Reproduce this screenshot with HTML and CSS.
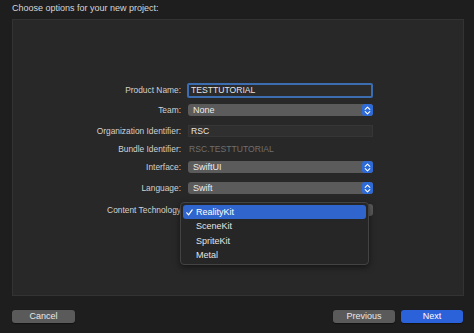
FILE: index.html
```html
<!DOCTYPE html>
<html lang="en">
<head>
    <meta charset="UTF-8">
    <meta name="viewport" content="width=device-width, initial-scale=1.0">
    <title>Choose options for your new project</title>
    <link rel="stylesheet" href="styles.css">
</head>
<body>
    <div class="sheet">
        <div class="title">Choose options for your new project:</div>

        <div class="panel">
            <div class="form">
                <label class="label">Product Name:</label>
                <div class="cell"><div class="field focused">TESTTUTORIAL</div></div>

                <label class="label">Team:</label>
                <div class="cell">
                    <div class="popup">None
                        <span class="stepper"><svg width="7" height="9" viewBox="0 0 7 9"><path d="M1.2 3.3 3.5 1.2 5.8 3.3M1.2 5.7 3.5 7.8 5.8 5.7" fill="none" stroke="#fff" stroke-width="1.1" stroke-linecap="round" stroke-linejoin="round"/></svg></span>
                    </div>
                </div>

                <label class="label">Organization Identifier:</label>
                <div class="cell"><div class="field">RSC</div></div>

                <label class="label">Bundle Identifier:</label>
                <div class="cell"><div class="static">RSC.TESTTUTORIAL</div></div>

                <label class="label">Interface:</label>
                <div class="cell">
                    <div class="popup">SwiftUI
                        <span class="stepper"><svg width="7" height="9" viewBox="0 0 7 9"><path d="M1.2 3.3 3.5 1.2 5.8 3.3M1.2 5.7 3.5 7.8 5.8 5.7" fill="none" stroke="#fff" stroke-width="1.1" stroke-linecap="round" stroke-linejoin="round"/></svg></span>
                    </div>
                </div>

                <label class="label">Language:</label>
                <div class="cell">
                    <div class="popup">Swift
                        <span class="stepper"><svg width="7" height="9" viewBox="0 0 7 9"><path d="M1.2 3.3 3.5 1.2 5.8 3.3M1.2 5.7 3.5 7.8 5.8 5.7" fill="none" stroke="#fff" stroke-width="1.1" stroke-linecap="round" stroke-linejoin="round"/></svg></span>
                    </div>
                </div>

                <label class="label">Content Technology</label>
                <div class="cell menu-anchor">
                    <!-- popup sits under the open menu, only its right edge shows -->
                    <div class="popup"></div>
                    <ul class="menu">
                        <li class="menu-item selected"><svg class="check" width="7" height="7" viewBox="0 0 7 7"><path d="M0.8 3.8 2.6 5.8 6.2 0.9" fill="none" stroke="#fff" stroke-width="1.2" stroke-linecap="round" stroke-linejoin="round"/></svg>RealityKit</li>
                        <li class="menu-item">SceneKit</li>
                        <li class="menu-item">SpriteKit</li>
                        <li class="menu-item">Metal</li>
                    </ul>
                </div>
            </div>
        </div>

        <div class="footer">
            <button class="btn">Cancel</button>
            <div class="footer-right">
                <button class="btn">Previous</button>
                <button class="btn primary">Next</button>
            </div>
        </div>
    </div>
</body>
</html>
```

FILE: styles.css
```css
body {
    margin: 0;
    padding: 0;
    background-color: #1e1e1e;
    font-family: "Liberation Sans", Arial, Helvetica, sans-serif;
    color: #dcdcdc;
}

.sheet {
    width: 474px;
    height: 333px;
    overflow: hidden;
}

.title {
    height: 16px;
    padding: 2px 12px 0;
    box-sizing: border-box;
    font-size: 9px;
    line-height: 12px;
    color: #d6d6d6;
}

.panel {
    margin: 3px 10px 0 12px;
    height: 277px;
    box-sizing: border-box;
    border: 1px solid #333;
    background-color: #282828;
    padding-top: 61px;
}

.form {
    display: grid;
    grid-template-columns: 168px 185px;
    grid-template-rows: 18px 22px 20px 16px 20px 22px 22px;
    column-gap: 7px;
    font-size: 8.4px;
}

.label {
    text-align: right;
    align-self: center;
    color: #d2d2d2;
    white-space: nowrap;
}

.cell {
    display: flex;
    align-items: center;
}

.field {
    width: 185px;
    height: 12px;
    box-sizing: border-box;
    padding-left: 2px;
    background-color: #2f2f2f;
    border: 1px solid #363636;
    font-size: 8.6px;
    line-height: 10px;
    color: #e6e6e6;
}

.field.focused {
    width: 187px;
    height: 15px;
    margin-left: -1px;
    padding-left: 2px;
    border: 2px solid #3c6db0;
    border-radius: 2px;
    background-color: #2b2b2b;
    line-height: 11px;
}

.static {
    padding-left: 1px;
    font-size: 8.6px;
    color: #6f6f6f;
}

.popup {
    position: relative;
    width: 185px;
    height: 12px;
    box-sizing: border-box;
    padding-left: 5px;
    border-radius: 3px;
    background-color: #5b5b5b;
    font-size: 9px;
    line-height: 12px;
    color: #ececec;
}

.stepper {
    position: absolute;
    right: 0;
    top: 0;
    width: 11px;
    height: 12px;
    border-radius: 3px;
    background-color: #2f6bd6;
    display: flex;
    align-items: center;
    justify-content: center;
}

.menu-anchor {
    position: relative;
}

.menu {
    position: absolute;
    left: -8px;
    top: 3px;
    width: 189px;
    height: 63px;
    box-sizing: border-box;
    margin: 0;
    padding: 2px;
    list-style: none;
    background-color: #262626;
    border: 1px solid #434343;
    border-radius: 4px;
    box-shadow: 0 2px 6px rgba(0, 0, 0, 0.5);
    font-size: 9px;
}

.menu-item {
    height: 14.4px;
    line-height: 14.4px;
    padding-left: 13px;
    position: relative;
    color: #e4e4e4;
}

.menu-item.selected {
    background-color: #2f65cd;
    border-radius: 3px;
    color: #fff;
}

.check {
    position: absolute;
    left: 3px;
    top: 4px;
}

.footer {
    display: flex;
    justify-content: space-between;
    padding: 14px 11px 0 12px;
}

.footer-right {
    display: flex;
    gap: 6px;
}

.btn {
    width: 63px;
    height: 13px;
    padding: 0;
    border: none;
    border-radius: 3px;
    background-color: #5a5a5a;
    color: #e8e8e8;
    font-family: "Liberation Sans", Arial, Helvetica, sans-serif;
    font-size: 9px;
    line-height: 13px;
    box-shadow: 0 0.5px 1px rgba(0, 0, 0, 0.4);
}

.footer-right .btn {
    width: 62px;
}

.btn.primary {
    background-color: #2c62d9;
    color: #fff;
}
```
